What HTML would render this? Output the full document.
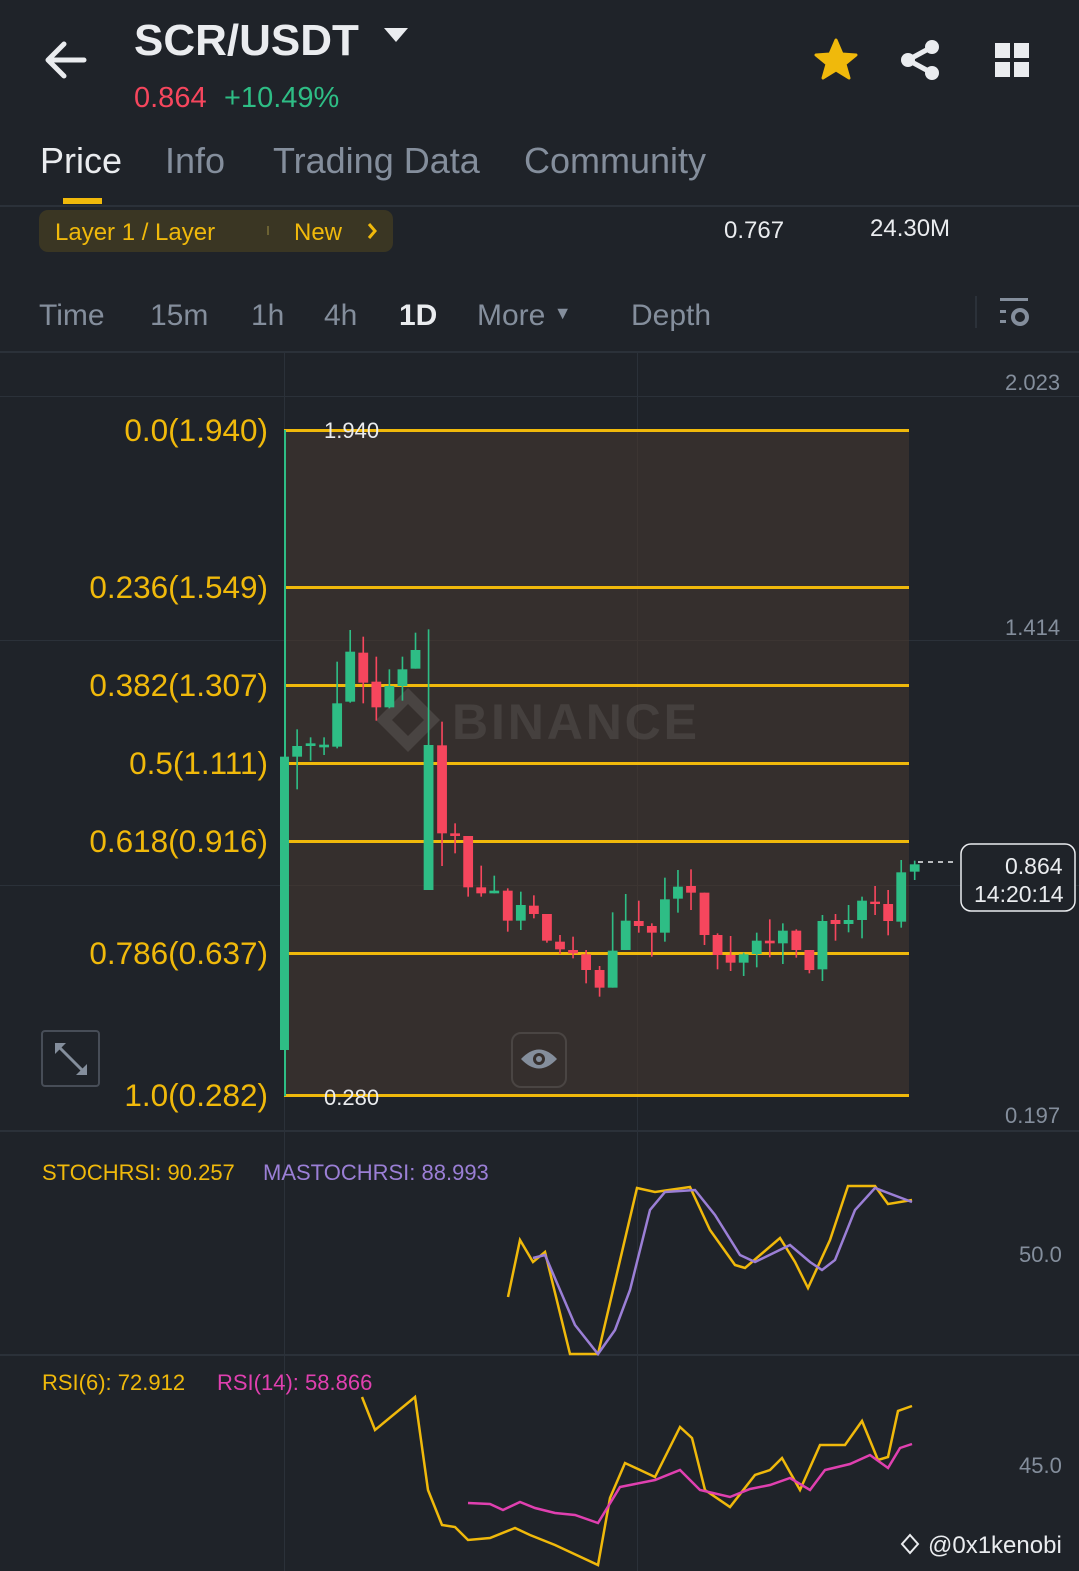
<!DOCTYPE html>
<html><head><meta charset="utf-8"><style>
html,body{margin:0;padding:0;background:#1f2329;}
body{width:1079px;height:1571px;overflow:hidden;position:relative;font-family:"Liberation Sans",sans-serif;}
.t{position:absolute;white-space:nowrap;margin-top:2px;}
.f{font-size:31.5px;color:#f0b90b;right:811px;}
</style></head><body>
<svg width="1079" height="1571" style="position:absolute;left:0;top:0" xmlns="http://www.w3.org/2000/svg">
<rect x="0" y="205" width="1079" height="2" fill="#2b3139"/>
<rect x="0" y="351" width="1079" height="2" fill="#2b3139"/>
<rect x="63" y="198" width="39" height="6" fill="#f0b90b"/>
<path d="M84 60 H48 M64 44 L48 60 L64 76" stroke="#eaecef" stroke-width="5" fill="none" stroke-linecap="round" stroke-linejoin="round"/>
<path d="M384 28 L408 28 L396 42 Z" fill="#eaecef"/>
<path d="M836 40 L842 54 L856 55 L845 64 L849 78 L836 70 L823 78 L827 64 L816 55 L830 54 Z" fill="#f0b90b" stroke="#f0b90b" stroke-width="3" stroke-linejoin="round"/>
<g fill="#eaecef"><circle cx="932" cy="47" r="7"/><circle cx="908" cy="60" r="7"/><circle cx="932" cy="73" r="7"/></g>
<path d="M932 47 L908 60 L932 73" stroke="#eaecef" stroke-width="5" fill="none"/>
<g fill="#eaecef"><rect x="995" y="43" width="15" height="15"/><rect x="1014" y="43" width="15" height="15"/><rect x="995" y="62" width="15" height="15"/><rect x="1014" y="62" width="15" height="15"/></g>
<rect x="39" y="210" width="354" height="42" rx="9" fill="#3a3623"/>
<rect x="267" y="226" width="2" height="9" fill="#6b6233"/>
<path d="M369 224 L375 231 L369 238" stroke="#f0b90b" stroke-width="3" fill="none"/>
<rect x="975" y="296" width="2" height="32" fill="#2b3139"/>
<g fill="#848e9c"><rect x="1000" y="298" width="28" height="3"/><rect x="1000" y="310" width="6" height="3"/><rect x="1000" y="320" width="6" height="3"/></g>
<circle cx="1020" cy="317" r="7" fill="none" stroke="#848e9c" stroke-width="4"/>
<g fill="#2b3139">
<rect x="0" y="396" width="1079" height="1"/><rect x="0" y="640" width="1079" height="1"/><rect x="0" y="885" width="1079" height="1"/>
<rect x="0" y="1130" width="1079" height="2"/><rect x="0" y="1354" width="1079" height="2"/>
<rect x="284" y="353" width="1" height="1218"/><rect x="637" y="353" width="1" height="1218"/>
</g>
<rect x="285" y="430" width="624" height="666" fill="#352f2d"/>
<g fill="#3c3532"><rect x="285" y="640" width="624" height="1"/><rect x="285" y="885" width="624" height="1"/><rect x="637" y="430" width="1" height="666"/></g>
<g opacity="0.1" fill="#ffffff"><path d="M408 688 L440 720 L408 752 L376 720 Z M408 704 L424 720 L408 736 L392 720 Z" fill-rule="evenodd"/></g>
<text x="452" y="739" font-family="Liberation Sans" font-weight="bold" font-size="50" fill="#ffffff" opacity="0.08" letter-spacing="3" textLength="248">BINANCE</text>
<g fill="#f0b90b"><rect x="284" y="429" width="625" height="3"/><rect x="284" y="586" width="625" height="3"/><rect x="284" y="684" width="625" height="3"/><rect x="284" y="762" width="625" height="3"/><rect x="284" y="840" width="625" height="3"/><rect x="284" y="952" width="625" height="3"/><rect x="284" y="1094" width="625" height="3"/></g>
<rect x="284" y="430" width="2" height="666" fill="#2ebd85"/>
<g transform="translate(280,620) scale(0.40816,0.33333)">
<g fill="#2ebd85">
<rect x="0" y="410" width="22" height="880"/>
<rect x="40" y="328" width="4" height="180"/><rect x="30" y="378" width="24" height="32"/>
<rect x="73" y="352" width="4" height="70"/><rect x="63" y="370" width="24" height="8"/>
<rect x="106" y="352" width="4" height="53"/><rect x="96" y="374" width="24" height="8"/>
<rect x="138" y="125" width="4" height="260"/><rect x="128" y="250" width="24" height="130"/>
<rect x="170" y="30" width="4" height="218"/><rect x="160" y="95" width="24" height="150"/>
<rect x="266" y="148" width="4" height="117"/><rect x="256" y="198" width="24" height="64"/>
<rect x="298" y="110" width="4" height="132"/><rect x="288" y="148" width="24" height="50"/>
<rect x="330" y="38" width="4" height="108"/><rect x="320" y="90" width="24" height="56"/>
<rect x="362" y="28" width="4" height="782"/><rect x="352" y="375" width="24" height="435"/>
<rect x="523" y="767" width="4" height="53"/><rect x="513" y="812" width="24" height="8"/>
<rect x="588" y="815" width="4" height="115"/><rect x="578" y="855" width="24" height="47"/>
<rect x="813" y="877" width="4" height="226"/><rect x="803" y="992" width="24" height="111"/>
<rect x="845" y="822" width="4" height="168"/><rect x="835" y="902" width="24" height="88"/>
<rect x="941" y="773" width="4" height="192"/><rect x="931" y="838" width="24" height="100"/>
<rect x="973" y="750" width="4" height="128"/><rect x="963" y="800" width="24" height="36"/>
<rect x="1134" y="998" width="4" height="70"/><rect x="1124" y="1003" width="24" height="25"/>
<rect x="1166" y="938" width="4" height="104"/><rect x="1156" y="962" width="24" height="40"/>
<rect x="1230" y="910" width="4" height="122"/><rect x="1220" y="932" width="24" height="38"/>
<rect x="1327" y="885" width="4" height="198"/><rect x="1317" y="903" width="24" height="145"/>
<rect x="1391" y="855" width="4" height="82"/><rect x="1381" y="900" width="24" height="12"/>
<rect x="1424" y="830" width="4" height="125"/><rect x="1414" y="842" width="24" height="58"/>
<rect x="1520" y="720" width="4" height="203"/><rect x="1510" y="757" width="24" height="148"/>
<rect x="1553" y="722" width="4" height="58"/><rect x="1543" y="733" width="24" height="22"/>
</g>
<g fill="#f6465d">
<rect x="202" y="50" width="4" height="200"/><rect x="192" y="98" width="24" height="90"/>
<rect x="234" y="110" width="4" height="192"/><rect x="224" y="185" width="24" height="77"/>
<rect x="395" y="305" width="4" height="433"/><rect x="385" y="376" width="24" height="264"/>
<rect x="427" y="610" width="4" height="90"/><rect x="417" y="640" width="24" height="8"/>
<rect x="459" y="648" width="4" height="182"/><rect x="449" y="648" width="24" height="154"/>
<rect x="491" y="737" width="4" height="93"/><rect x="481" y="802" width="24" height="18"/>
<rect x="556" y="805" width="4" height="130"/><rect x="546" y="812" width="24" height="90"/>
<rect x="620" y="826" width="4" height="69"/><rect x="610" y="857" width="24" height="25"/>
<rect x="652" y="882" width="4" height="86"/><rect x="642" y="882" width="24" height="80"/>
<rect x="684" y="945" width="4" height="57"/><rect x="674" y="965" width="24" height="23"/>
<rect x="716" y="950" width="4" height="65"/><rect x="706" y="990" width="24" height="10"/>
<rect x="748" y="990" width="4" height="100"/><rect x="738" y="1003" width="24" height="47"/>
<rect x="781" y="1038" width="4" height="92"/><rect x="771" y="1050" width="24" height="53"/>
<rect x="877" y="842" width="4" height="96"/><rect x="867" y="903" width="24" height="15"/>
<rect x="909" y="910" width="4" height="100"/><rect x="899" y="918" width="24" height="20"/>
<rect x="1005" y="748" width="4" height="122"/><rect x="995" y="798" width="24" height="20"/>
<rect x="1038" y="818" width="4" height="157"/><rect x="1028" y="818" width="24" height="127"/>
<rect x="1070" y="940" width="4" height="108"/><rect x="1060" y="945" width="24" height="60"/>
<rect x="1102" y="948" width="4" height="105"/><rect x="1092" y="1005" width="24" height="23"/>
<rect x="1198" y="898" width="4" height="114"/><rect x="1188" y="962" width="24" height="8"/>
<rect x="1263" y="928" width="4" height="85"/><rect x="1253" y="932" width="24" height="58"/>
<rect x="1295" y="990" width="4" height="70"/><rect x="1285" y="990" width="24" height="60"/>
<rect x="1359" y="882" width="4" height="80"/><rect x="1349" y="900" width="24" height="12"/>
<rect x="1456" y="798" width="4" height="87"/><rect x="1446" y="845" width="24" height="7"/>
<rect x="1488" y="810" width="4" height="136"/><rect x="1478" y="852" width="24" height="51"/>
</g>
</g>
<path d="M918 862 H958" stroke="#eaecef" stroke-width="1.5" stroke-dasharray="5,5"/>
<rect x="961" y="844" width="114" height="67" rx="10" fill="#1f2329" stroke="#eaecef" stroke-width="1.5"/>
<rect x="42" y="1031" width="57" height="55" rx="3" fill="none" stroke="#474d57" stroke-width="2"/>
<path d="M56 1044 L86 1074" stroke="#848e9c" stroke-width="3"/>
<path d="M55 1043 L66 1043 L55 1054 Z M87 1075 L76 1075 L87 1064 Z" fill="#848e9c"/>
<rect x="512" y="1033" width="54" height="54" rx="9" fill="none" stroke="#4a4543" stroke-width="2"/>
<path d="M521 1059 Q539 1040 557 1059 Q539 1078 521 1059 Z" fill="#848e9c"/>
<circle cx="539" cy="1059" r="6" fill="#352f2d"/><circle cx="539" cy="1059" r="3" fill="#848e9c"/>
<polyline fill="none" stroke="#f0b90b" stroke-width="2.5" points="508,1297 520,1240 533,1262 545,1252 570,1354 598,1354 637,1188 655,1192 690,1187 710,1230 735,1265 745,1268 780,1238 795,1262 808,1288 830,1240 848,1186 875,1186 888,1204 912,1200"/>
<polyline fill="none" stroke="#9b7fd6" stroke-width="2.5" points="533,1258 545,1255 575,1325 598,1354 615,1330 630,1290 650,1210 665,1192 695,1190 715,1215 740,1255 755,1262 790,1245 810,1262 822,1270 835,1260 855,1210 875,1188 912,1202"/>
<polyline fill="none" stroke="#f0b90b" stroke-width="2.5" points="362,1397 375,1430 415,1397 428,1490 442,1525 455,1527 468,1540 490,1538 515,1528 530,1535 555,1545 598,1565 610,1498 625,1463 655,1477 680,1427 692,1438 705,1490 730,1507 755,1475 770,1470 782,1458 800,1490 820,1445 845,1445 862,1421 878,1460 888,1457 898,1411 912,1406"/>
<polyline fill="none" stroke="#e040b0" stroke-width="2.5" points="468,1503 490,1504 503,1510 520,1502 535,1508 555,1513 575,1515 598,1523 620,1487 655,1480 680,1470 700,1490 730,1497 750,1489 770,1485 790,1478 810,1490 825,1470 850,1464 870,1455 888,1468 900,1448 912,1444"/>
<path d="M910 1535 L918 1544 L910 1553 L902 1544 Z" fill="none" stroke="#eaecef" stroke-width="2"/>
</svg>

<div class="t" style="left:134px;top:14px;font-size:44px;font-weight:bold;color:#eaecef;">SCR/USDT</div>
<div class="t" style="left:134px;top:80px;font-size:29px;color:#f6465d;">0.864</div>
<div class="t" style="left:224px;top:80px;font-size:29px;color:#2ebd85;">+10.49%</div>
<div class="t" style="left:40px;top:138px;font-size:36px;color:#eaecef;">Price</div>
<div class="t" style="left:165px;top:138px;font-size:36px;color:#848e9c;">Info</div>
<div class="t" style="left:273px;top:138px;font-size:36px;color:#848e9c;">Trading Data</div>
<div class="t" style="left:524px;top:138px;font-size:36px;color:#848e9c;">Community</div>
<div class="t" style="left:55px;top:217px;font-size:24px;color:#f0b90b;">Layer 1 / Layer</div>
<div class="t" style="left:294px;top:217px;font-size:24px;color:#f0b90b;">New</div>
<div class="t" style="left:724px;top:215px;font-size:24px;color:#eaecef;">0.767</div>
<div class="t" style="left:870px;top:213px;font-size:24px;color:#eaecef;">24.30M</div>
<div class="t" style="left:39px;top:297px;font-size:30px;color:#848e9c;">Time</div>
<div class="t" style="left:150px;top:297px;font-size:30px;color:#848e9c;">15m</div>
<div class="t" style="left:251px;top:297px;font-size:30px;color:#848e9c;">1h</div>
<div class="t" style="left:324px;top:297px;font-size:30px;color:#848e9c;">4h</div>
<div class="t" style="left:399px;top:297px;font-size:30px;font-weight:bold;color:#eaecef;">1D</div>
<div class="t" style="left:477px;top:297px;font-size:30px;color:#848e9c;">More <span style="font-size:18px;position:relative;top:-6px">▼</span></div>
<div class="t" style="left:631px;top:297px;font-size:30px;color:#848e9c;">Depth</div>

<div class="t" style="left:1005px;top:368px;font-size:22px;color:#848e9c;">2.023</div>
<div class="t" style="left:1005px;top:613px;font-size:22px;color:#848e9c;">1.414</div>
<div class="t" style="left:1005px;top:1101px;font-size:22px;color:#848e9c;">0.197</div>
<div class="t" style="left:1019px;top:1240px;font-size:22px;color:#848e9c;">50.0</div>
<div class="t" style="left:1019px;top:1451px;font-size:22px;color:#848e9c;">45.0</div>
<div class="t" style="left:1005px;top:851px;font-size:23px;color:#eaecef;">0.864</div>
<div class="t" style="left:974px;top:879px;font-size:23px;color:#eaecef;">14:20:14</div>

<div class="t f" style="top:410px;">0.0(1.940)</div>
<div class="t f" style="top:567px;">0.236(1.549)</div>
<div class="t f" style="top:665px;">0.382(1.307)</div>
<div class="t f" style="top:743px;">0.5(1.111)</div>
<div class="t f" style="top:821px;">0.618(0.916)</div>
<div class="t f" style="top:933px;">0.786(0.637)</div>
<div class="t f" style="top:1075px;">1.0(0.282)</div>
<div class="t" style="left:324px;top:416px;font-size:22px;color:#eaecef;">1.940</div>
<div class="t" style="left:324px;top:1083px;font-size:22px;color:#eaecef;">0.280</div>

<div class="t" style="left:42px;top:1158px;font-size:22px;color:#f0b90b;">STOCHRSI: 90.257</div>
<div class="t" style="left:263px;top:1158px;font-size:22px;color:#9b7fd6;">MASTOCHRSI: 88.993</div>
<div class="t" style="left:42px;top:1368px;font-size:22px;color:#f0b90b;">RSI(6): 72.912</div>
<div class="t" style="left:217px;top:1368px;font-size:22px;color:#e040b0;">RSI(14): 58.866</div>
<div class="t" style="left:928px;top:1530px;font-size:24px;color:#eaecef;">@0x1kenobi</div>
</body></html>
